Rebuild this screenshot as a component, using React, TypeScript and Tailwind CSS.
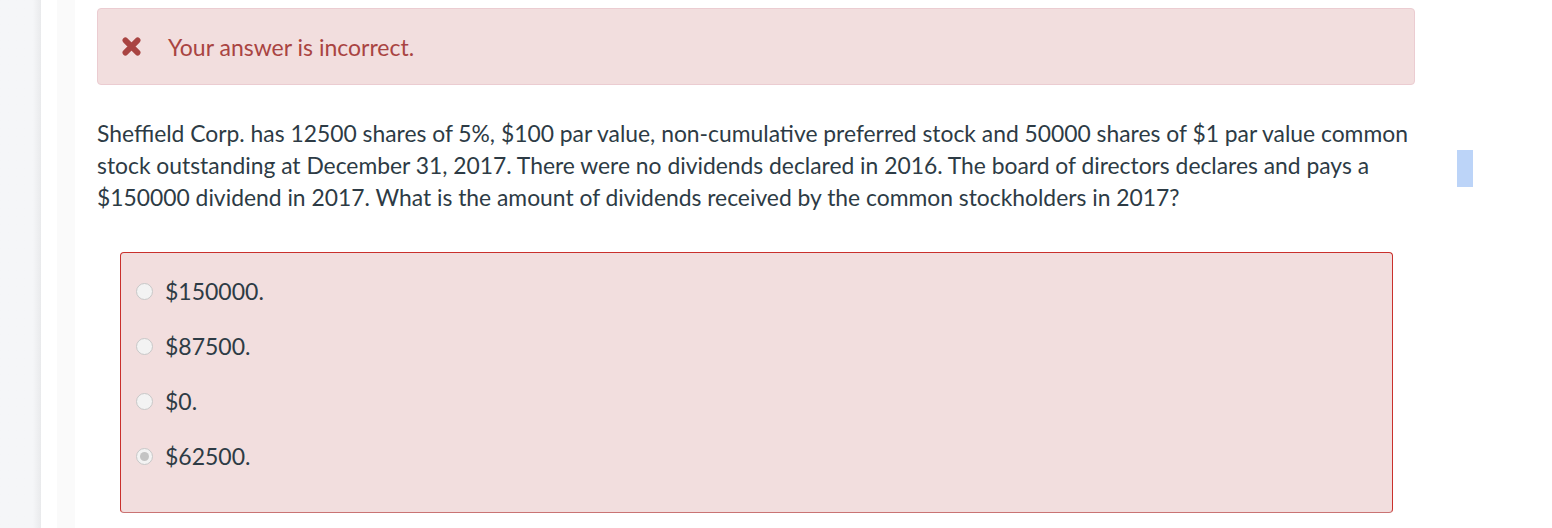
const options = [
  { label: '$150000.', checked: false },
  { label: '$87500.', checked: false },
  { label: '$0.', checked: false },
  { label: '$62500.', checked: true },
];

export default function App() {
  return (
    <div className="flex h-[528px] w-[1552px] overflow-hidden bg-white font-['Lato','Noto_Sans',sans-serif]">
      {/* left rail */}
      <div className="w-[41px] shrink-0 bg-gradient-to-r from-[#f5f6f8] from-80% to-[#e9eaec]" />
      <div className="w-[16px] shrink-0 bg-white" />
      <div className="w-[18px] shrink-0 bg-[#fafafa]" />

      <div className="relative w-[1340px] shrink-0 pl-[22px] pt-[8px]">
        {/* alert */}
        <div className="flex h-[77px] w-[1318px] items-center rounded-[4px] border border-[#ebccd1] bg-[#f2dede] pl-[23px] text-[23px] text-[#a94442]">
          <svg viewBox="0 0 24 24" className="h-[21px] w-[21px]" fill="none">
            <path d="M5 5 L19 19 M19 5 L5 19" stroke="#a94442" strokeWidth="6.5" strokeLinecap="round" />
          </svg>
          <span className="ml-[26px] leading-[30px]">Your answer is incorrect.</span>
        </div>

        {/* question */}
        <p className="mt-[32px] w-[1340px] text-[22.85px] leading-[32px] text-[#2d3b45]">
          Sheffield Corp. has 12500 shares of 5%, $100 par value, non-cumulative preferred stock and 50000 shares of $1 par value common stock outstanding at December 31, 2017. There were no dividends declared in 2016. The board of directors declares and pays a $150000 dividend in 2017. What is the amount of dividends received by the common stockholders in 2017?
        </p>

        {/* options */}
        <div className="ml-[23px] mt-[39px] flex h-[261px] w-[1273px] flex-col rounded-[4px] border border-[#c9302c] border-b-[#c97373] bg-[#f2dede] pl-[15px] pt-[25px]">
          {options.map((o) => (
            <div key={o.label} className="flex h-[55px] items-start">
              <span className="mt-[5px] flex h-[17px] w-[17px] shrink-0 items-center justify-center rounded-full border border-[#c8c8c8] bg-[#f3f3f3]">
                {o.checked && <span className="h-[9px] w-[9px] rounded-full bg-[#c4c4c4]" />}
              </span>
              <span className="ml-[12px] text-[23px] leading-[26px] text-[#2d3b45]">{o.label}</span>
            </div>
          ))}
        </div>
      </div>

      {/* selection marker */}
      <div className="ml-[42px] mt-[150px] h-[37px] w-[16px] bg-[#bcd4f8]" />
    </div>
  );
}
